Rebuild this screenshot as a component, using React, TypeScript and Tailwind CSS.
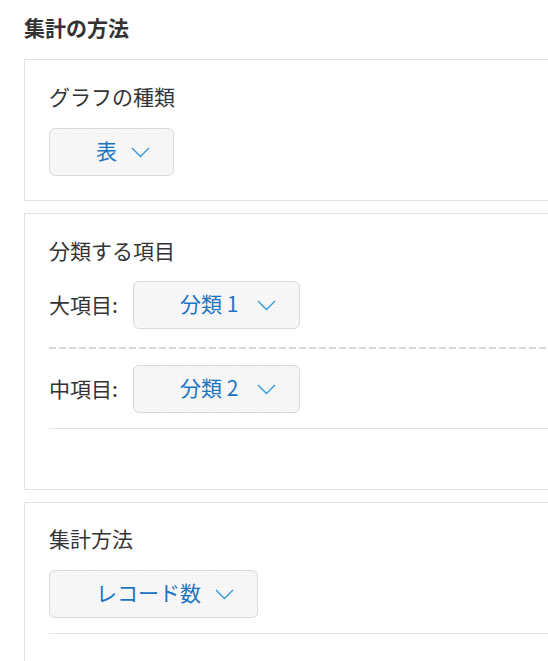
import React from "react";

const font = { fontFamily: '"Noto Sans CJK JP", "Noto Sans", sans-serif' };

function Chevron() {
  return (
    <svg width="19" height="11" viewBox="0 0 19 11" className="block">
      <polyline points="1,1 9.5,9.5 18,1" fill="none" stroke="#3498db" strokeWidth="1.4" />
    </svg>
  );
}

function Select({ label, width }: { label: string; width: string }) {
  return (
    <div
      className={`${width} h-[48px] flex items-center justify-between pl-[46px] pr-[23px] rounded-[6px] border border-[#d9d9d9] bg-[#f7f7f7] bg-[radial-gradient(#efefef_0.6px,transparent_0.7px)] bg-[length:3px_3px]`}
    >
      <span className="text-[21px] leading-[30px] pb-[5px] text-[#1a74c4] whitespace-nowrap">{label}</span>
      <Chevron />
    </div>
  );
}

function Label({ children }: { children: React.ReactNode }) {
  return <div className="text-[21px] leading-[30px] text-[#333333] h-[30px]">{children}</div>;
}

export default function App() {
  return (
    <div className="w-[548px] h-[661px] overflow-hidden bg-white" style={font}>
      <div className="w-[620px] pl-6 pt-[12px]">
        <div className="text-[21px] leading-[30px] font-bold text-[#333333]">集計の方法</div>

        <div className="mt-[17px] border border-[#e3e3e3] pl-6 pt-[21px] pb-6">
          <Label>グラフの種類</Label>
          <div className="mt-[17px]">
            <Select label="表" width="w-[125px]" />
          </div>
        </div>

        <div className="mt-3 border border-[#e3e3e3] pl-6 pt-[21px] pb-[60px]">
          <Label>分類する項目</Label>
          <div className="mt-[16px] flex items-center">
            <div className="w-[84px] text-[21px] leading-[30px] pb-[3px] text-[#333333]">大項目:</div>
            <Select label="分類 1" width="w-[167px]" />
          </div>
          <div className="mt-[18px] h-[2px] bg-[repeating-linear-gradient(90deg,#d9d9d9_0px,#d9d9d9_7px,transparent_7px,transparent_10px)]" />
          <div className="mt-4 flex items-center">
            <div className="w-[84px] text-[21px] leading-[30px] pb-[3px] text-[#333333]">中項目:</div>
            <Select label="分類 2" width="w-[167px]" />
          </div>
          <div className="mt-[15px] h-px bg-[#e3e3e3]" />
        </div>

        <div className="mt-3 border border-[#e3e3e3] pl-6 pt-[20px] pb-6">
          <Label>集計方法</Label>
          <div className="mt-[17px]">
            <Select label="レコード数" width="w-[209px]" />
          </div>
          <div className="mt-[15px] h-px bg-[#e3e3e3]" />
          <div className="h-[40px]" />
        </div>
      </div>
    </div>
  );
}
